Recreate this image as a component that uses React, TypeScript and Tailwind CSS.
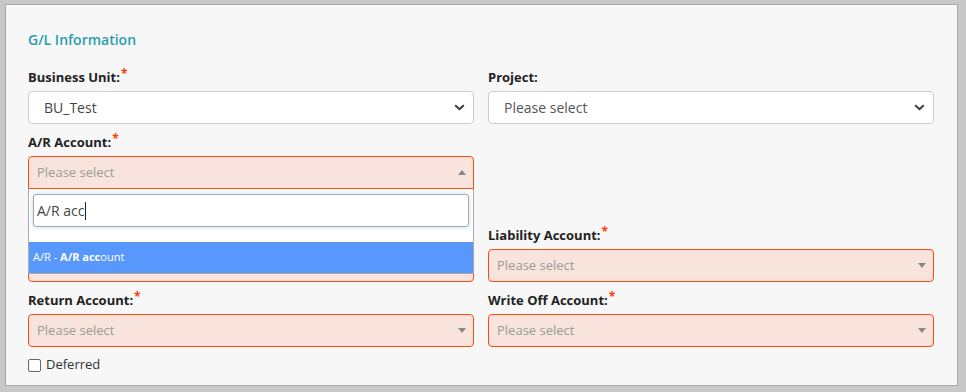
import type { JSX, ReactNode } from 'react';

const font = { fontFamily: '"Open Sans", "Liberation Sans", sans-serif' };

function Label({ text, required }: { readonly text: string; readonly required?: boolean }): JSX.Element {
  return (
    <div className="mb-[4px] h-[20px] text-[13px] font-bold leading-[20px] text-[#222]">
      {text}
      {required && <span className="relative -top-[4px] ml-[1px] text-[12px] text-[#ff3c00]">*</span>}
    </div>
  );
}

function Chevron(): JSX.Element {
  return (
    <svg width="11" height="7" viewBox="0 0 11 7" className="shrink-0">
      <path d="M1.2 1.2 5.5 5.3 9.8 1.2" fill="none" stroke="#3a3a3a" strokeWidth="1.9" />
    </svg>
  );
}

function PlainSelect({ value, muted }: { readonly value: string; readonly muted?: boolean }): JSX.Element {
  return (
    <div className="flex h-[33px] items-center justify-between rounded-[4px] border border-[#cdcdcd] bg-white pl-[15px] pr-[8px]">
      <span className={muted ? 'text-[14px] text-[#555]' : 'text-[14px] text-[#444]'}>{value}</span>
      <Chevron />
    </div>
  );
}

function ErrorSelect({ open, empty }: { readonly open?: boolean; readonly empty?: boolean }): JSX.Element {
  return (
    <div
      className={
        open
          ? 'flex h-[33px] items-center justify-between rounded-t-[4px] border border-[#ff4a12] bg-[#f8e4dc] pl-[8px] pr-[7px]'
          : 'flex h-[33px] items-center justify-between rounded-[4px] border border-[#ff4a12] bg-[#f8e4dc] pl-[8px] pr-[7px]'
      }
    >
      {!empty && <span className="text-[13px] text-[#9b9b9b]">Please select</span>}
      {!empty && (open ? (
        <span className="h-0 w-0 border-x-[4px] border-b-[5px] border-x-transparent border-b-[#888]" />
      ) : (
        <span className="h-0 w-0 border-x-[4px] border-t-[5px] border-x-transparent border-t-[#888]" />
      ))}
    </div>
  );
}

function Field({ children, className }: { readonly children: ReactNode; readonly className?: string }): JSX.Element {
  return <div className={className}>{children}</div>;
}

export default function App(): JSX.Element {
  return (
    <div style={font} className="h-[392px] w-[966px] bg-[#c8c8c8] pb-[6px] pl-[5px] pr-[8px] pt-[4px]">
      <div className="h-full border border-[#a9a9a9] bg-[#f7f7f7] pl-[22px] pr-[23px] pt-[25px]">
        <h3 className="h-[20px] text-[14px] font-semibold leading-[20px] text-[#2a9db2]">G/L Information</h3>

        <div className="mt-[17px] grid grid-cols-2 gap-x-[14px] gap-y-[8px]">
          <Field>
            <Label text="Business Unit:" required />
            <PlainSelect value="BU_Test" />
          </Field>
          <Field>
            <Label text="Project:" />
            <PlainSelect value="Please select" muted />
          </Field>

          <Field className="relative z-10">
            <Label text="A/R Account:" required />
            <ErrorSelect open />
            <div className="absolute left-0 right-0 top-full h-[85px] border-x border-b border-[#aaa] bg-white">
              <div className="px-[4px] pt-[5px]">
                <div className="flex h-[33px] items-center rounded-[3px] border border-[#aaa] bg-white pl-[3px] text-[14px] text-[#444] shadow-[0_0_4px_rgba(82,168,236,0.45)]">
                  A/R acc
                  <span className="ml-[1px] h-[18px] w-[1px] bg-[#222]" />
                </div>
              </div>
              <div className="mt-[15px] flex h-[31px] items-center whitespace-pre bg-[#5897fb] pl-[4px] text-[11px] text-white">
                <span>
                  {'A/R - '}
                  <b>A/R acc</b>
                  {'ount'}
                </span>
              </div>
            </div>
          </Field>
          <div />

          {/* field hidden under the open dropdown: only its bottom edge shows */}
          <Field className="mt-[28px]">
            <div className="mb-[4px] h-[20px]" />
            <ErrorSelect empty />
          </Field>
          <Field className="mt-[28px]">
            <Label text="Liability Account:" required />
            <ErrorSelect />
          </Field>

          <Field>
            <Label text="Return Account:" required />
            <ErrorSelect />
          </Field>
          <Field>
            <Label text="Write Off Account:" required />
            <ErrorSelect />
          </Field>
        </div>

        <label className="mt-[8px] flex h-[20px] items-center gap-[5px] text-[13px] text-[#333]">
          <span className="h-[13px] w-[13px] rounded-[2px] border border-[#666] bg-white" />
          Deferred
        </label>
      </div>
    </div>
  );
}
